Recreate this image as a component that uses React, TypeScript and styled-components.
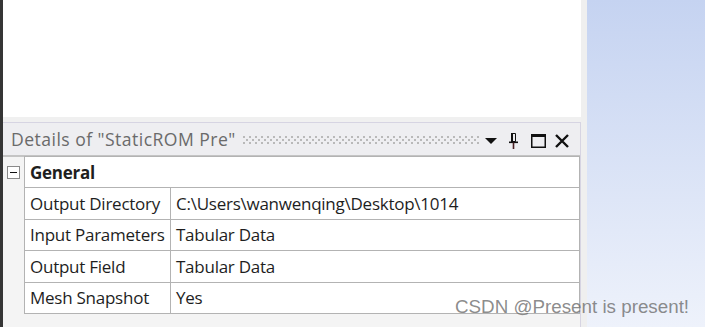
import React from "react";
import styled, { createGlobalStyle } from "styled-components";

const Global = createGlobalStyle`
  html, body { margin: 0; padding: 0; }
  body { width: 705px; height: 327px; overflow: hidden; background: #f0f0f0; }
  #root { width: 705px; height: 327px; }
`;

const Screen = styled.div`
  position: relative;
  display: flex;
  width: 705px;
  height: 327px;
  font-family: "Open Sans", "Noto Sans", sans-serif;
`;

const DarkEdge = styled.div`
  width: 3px;
  background: #353535;
  flex: none;
`;

const Main = styled.div`
  width: 578px;
  display: flex;
  flex-direction: column;
  background: #f0f0f0;
  flex: none;
`;

const Viewport = styled.div`
  height: 117px;
  background: #ffffff;
  flex: none;
`;

const Gap = styled.div`
  height: 5px;
  background: #f0f0f0;
  flex: none;
`;

const Panel = styled.div`
  flex: 1;
  display: flex;
  flex-direction: column;
  border-top: 1px solid #d6d4e2;
  border-right: 1px solid #d6d4e2;
  background: #f4f4f4;
`;

const Header = styled.div`
  height: 34px;
  display: flex;
  align-items: center;
  padding: 0 11px 0 8px;
  background: #eeeef1;
  border-bottom: 2px solid #c4c4c4;
  box-sizing: border-box;
  flex: none;
`;

const Title = styled.span`
  font-size: 17.6px;
  color: #6a6a6a;
  white-space: nowrap;
  letter-spacing: 0.45px;
`;

const Grip = styled.div`
  flex: 1;
  height: 8px;
  margin: 1px 5px 0 7px;
  background-image: radial-gradient(circle at 1px 1px, #b9b9b9 1px, transparent 1.4px),
    radial-gradient(circle at 1px 1px, #b9b9b9 1px, transparent 1.4px);
  background-size: 6px 6px, 6px 6px;
  background-position: 0 0, 3px 3px;
`;

const Tools = styled.div`
  display: flex;
  align-items: center;
  margin-top: 3px;
`;

const Tool = styled.span<{ $gap: number }>`
  display: flex;
  margin-left: ${(p) => p.$gap}px;
`;

const Body = styled.div`
  display: flex;
  align-items: flex-start;
  flex: 1;
`;

const Gutter = styled.div`
  width: 21px;
  flex: none;
  padding-top: 9px;
  padding-left: 4px;
  box-sizing: border-box;
`;

const Toggle = styled.div`
  width: 13px;
  height: 13px;
  border: 1px solid #8a8a8a;
  background: #ffffff;
  display: flex;
  align-items: center;
  justify-content: center;
  box-sizing: border-box;
  &::after {
    content: "";
    width: 7px;
    height: 1.5px;
    background: #111;
  }
`;

const Table = styled.table`
  border-collapse: collapse;
  width: 556px;
  background: #ffffff;
  table-layout: fixed;
  margin-top: -1px;
`;

const Cell = styled.td<{ $bold?: boolean }>`
  border: 1px solid #b3b3b3;
  height: 31.4px;
  padding: 0 0 0 5px;
  font-size: 17px;
  color: #1e1e1e;
  font-weight: ${(p) => (p.$bold ? 700 : 400)};
  white-space: nowrap;
  overflow: hidden;
  box-sizing: border-box;
  letter-spacing: -0.25px;
`;

const Side = styled.div`
  width: 6px;
  background: #efefef;
  flex: none;
`;

const Sky = styled.div`
  flex: 1;
  background: linear-gradient(#c5d3f1, #eef2fb);
`;

const Watermark = styled.div`
  position: absolute;
  left: 455px;
  top: 298px;
  font-family: "Liberation Sans", Arial, sans-serif;
  font-size: 18.8px;
  line-height: 1;
  color: rgba(110, 110, 110, 0.8);
  white-space: nowrap;
`;

const Arrow = () => (
  <svg width="12" height="6" viewBox="0 0 12 6">
    <path d="M0 0H12L6 6Z" fill="#111" />
  </svg>
);

const Pin = () => (
  <svg width="9" height="16" viewBox="0 0 9 16">
    <path d="M2.5 0.5H6.5V8.5H2.5Z" fill="none" stroke="#111" strokeWidth="1" />
    <rect x="2" y="0" width="2" height="9" fill="#111" />
    <rect x="0" y="8.5" width="9" height="1.6" fill="#111" />
    <rect x="3.7" y="9.5" width="1.6" height="6.5" fill="#4a1f22" />
  </svg>
);

const Maximize = () => (
  <svg width="15" height="14" viewBox="0 0 15 14">
    <rect x="0.75" y="0.75" width="13.5" height="12.5" fill="none" stroke="#111" strokeWidth="1.5" />
    <rect x="0" y="0" width="15" height="3" fill="#111" />
  </svg>
);

const Close = () => (
  <svg width="14" height="14" viewBox="0 0 14 14">
    <path d="M1 1L13 13M13 1L1 13" stroke="#111" strokeWidth="2.4" />
  </svg>
);

const rows: [string, string][] = [
  ["Output Directory", "C:\\Users\\wanwenqing\\Desktop\\1014"],
  ["Input Parameters", "Tabular Data"],
  ["Output Field", "Tabular Data"],
  ["Mesh Snapshot", "Yes"],
];

export default function App() {
  return (
    <Screen>
      <Global />
      <DarkEdge />
      <Main>
        <Viewport />
        <Gap />
        <Panel>
          <Header>
            <Title>Details of "StaticROM Pre"</Title>
            <Grip />
            <Tools>
              <Tool $gap={0}>
                <Arrow />
              </Tool>
              <Tool $gap={12}>
                <Pin />
              </Tool>
              <Tool $gap={13}>
                <Maximize />
              </Tool>
              <Tool $gap={9}>
                <Close />
              </Tool>
            </Tools>
          </Header>
          <Body>
            <Gutter>
              <Toggle />
            </Gutter>
            <Table>
              <colgroup>
                <col style={{ width: 146 }} />
                <col />
              </colgroup>
              <tbody>
                <tr>
                  <Cell colSpan={2} $bold>
                    General
                  </Cell>
                </tr>
                {rows.map(([k, v]) => (
                  <tr key={k}>
                    <Cell>{k}</Cell>
                    <Cell>{v}</Cell>
                  </tr>
                ))}
              </tbody>
            </Table>
          </Body>
        </Panel>
      </Main>
      <Side />
      <Sky />
      <Watermark>CSDN @Present is present!</Watermark>
    </Screen>
  );
}
